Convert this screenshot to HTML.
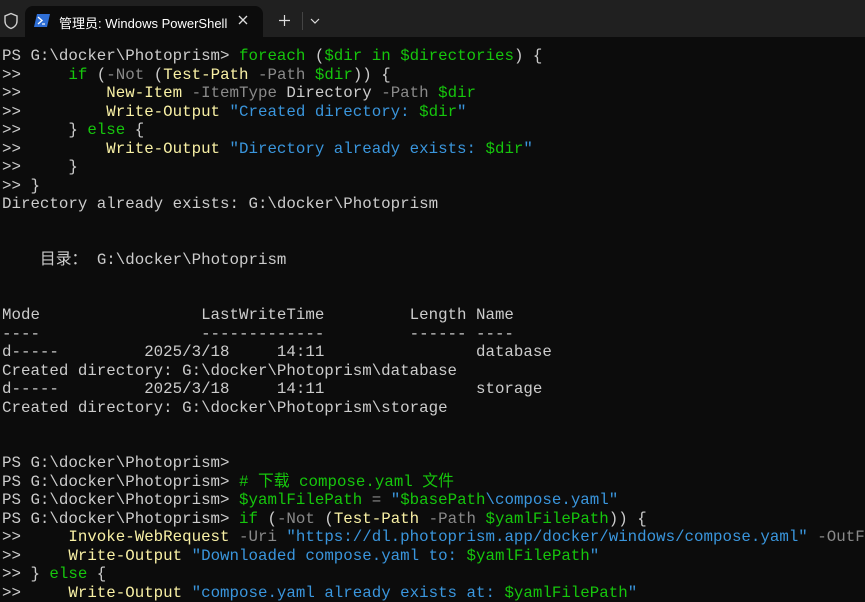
<!DOCTYPE html>
<html><head><meta charset="utf-8"><style>
html,body{margin:0;padding:0;width:865px;height:591px;overflow:hidden;background:#0c0c0c}
.bar{position:absolute;left:0;top:0;width:865px;height:37px;background:#202020}
.tab{position:absolute;left:25px;top:6px;width:238px;height:31px;background:#0c0c0c;border-radius:8px 8px 0 0}
.title{position:absolute;left:59px;top:13px;color:#fff;font:13px "Liberation Sans","Noto Sans CJK SC",sans-serif}
pre{position:absolute;left:2px;top:47px;margin:0;font:15.8px/18.5px "Liberation Mono","Noto Sans CJK SC",monospace;color:#cccccc;white-space:pre}
.g{color:#16c60c}.y{color:#f9f1a5}.b{color:#3a96dd}.d{color:#8a8a8a}
.c{display:inline-block;width:56.9px}
</style></head><body>
<div class="bar">
<svg style="position:absolute;left:3px;top:12px" width="16" height="18" viewBox="0 0 16 18"><path d="M8 1.5 L14 4 V9 C14 13 11 15.5 8 16.5 C5 15.5 2 13 2 9 V4 Z" fill="none" stroke="#cfcfcf" stroke-width="1.4"/></svg>
<div class="tab"></div>
<svg style="position:absolute;left:34px;top:14px" width="16" height="13" viewBox="0 0 16 13"><path d="M3 0 H16 L13 13 H0 Z" fill="#2f6fd6"/><path d="M4 3 L8 6.5 L4 10" fill="none" stroke="#fff" stroke-width="1.4"/><path d="M8 10 H11" stroke="#fff" stroke-width="1.2"/></svg>
<div class="title">管理员: Windows PowerShell</div>
<svg style="position:absolute;left:238px;top:15px" width="10" height="10"><path d="M1 1 L9 9 M9 1 L1 9" stroke="#ddd" stroke-width="1.3"/></svg>
<svg style="position:absolute;left:279px;top:15px" width="11" height="11"><path d="M5.5 0 V11 M0 5.5 H11" stroke="#ddd" stroke-width="1.2"/></svg>
<div style="position:absolute;left:302px;top:12px;width:1px;height:18px;background:#444"></div>
<svg style="position:absolute;left:310px;top:18px" width="10" height="6"><path d="M1 1 L5 5 L9 1" fill="none" stroke="#ddd" stroke-width="1.2"/></svg>
</div>
<pre>PS G:\docker\Photoprism> <span class="g">foreach</span> (<span class="g">$dir</span> <span class="g">in</span> <span class="g">$directories</span>) {
>>     <span class="g">if</span> (<span class="d">-Not</span> (<span class="y">Test-Path</span> <span class="d">-Path</span> <span class="g">$dir</span>)) {
>>         <span class="y">New-Item</span> <span class="d">-ItemType</span> Directory <span class="d">-Path</span> <span class="g">$dir</span>
>>         <span class="y">Write-Output</span> <span class="b">"Created directory: </span><span class="g">$dir</span><span class="b">"</span>
>>     } <span class="g">else</span> {
>>         <span class="y">Write-Output</span> <span class="b">"Directory already exists: </span><span class="g">$dir</span><span class="b">"</span>
>>     }
>> }
Directory already exists: G:\docker\Photoprism


    <span class="c">目录：</span>G:\docker\Photoprism


Mode                 LastWriteTime         Length Name
----                 -------------         ------ ----
d-----         2025/3/18     14:11                database
Created directory: G:\docker\Photoprism\database
d-----         2025/3/18     14:11                storage
Created directory: G:\docker\Photoprism\storage


PS G:\docker\Photoprism>
PS G:\docker\Photoprism> <span class="g"># 下载 compose.yaml 文件</span>
PS G:\docker\Photoprism> <span class="g">$yamlFilePath</span> <span class="d">=</span> <span class="b">"</span><span class="g">$basePath</span><span class="b">\compose.yaml"</span>
PS G:\docker\Photoprism> <span class="g">if</span> (<span class="d">-Not</span> (<span class="y">Test-Path</span> <span class="d">-Path</span> <span class="g">$yamlFilePath</span>)) {
>>     <span class="y">Invoke-WebRequest</span> <span class="d">-Uri</span> <span class="b">"https://dl.photoprism.app/docker/windows/compose.yaml"</span> <span class="d">-OutFile</span>
>>     <span class="y">Write-Output</span> <span class="b">"Downloaded compose.yaml to: </span><span class="g">$yamlFilePath</span><span class="b">"</span>
>> } <span class="g">else</span> {
>>     <span class="y">Write-Output</span> <span class="b">"compose.yaml already exists at: </span><span class="g">$yamlFilePath</span><span class="b">"</span></pre>
</body></html>
